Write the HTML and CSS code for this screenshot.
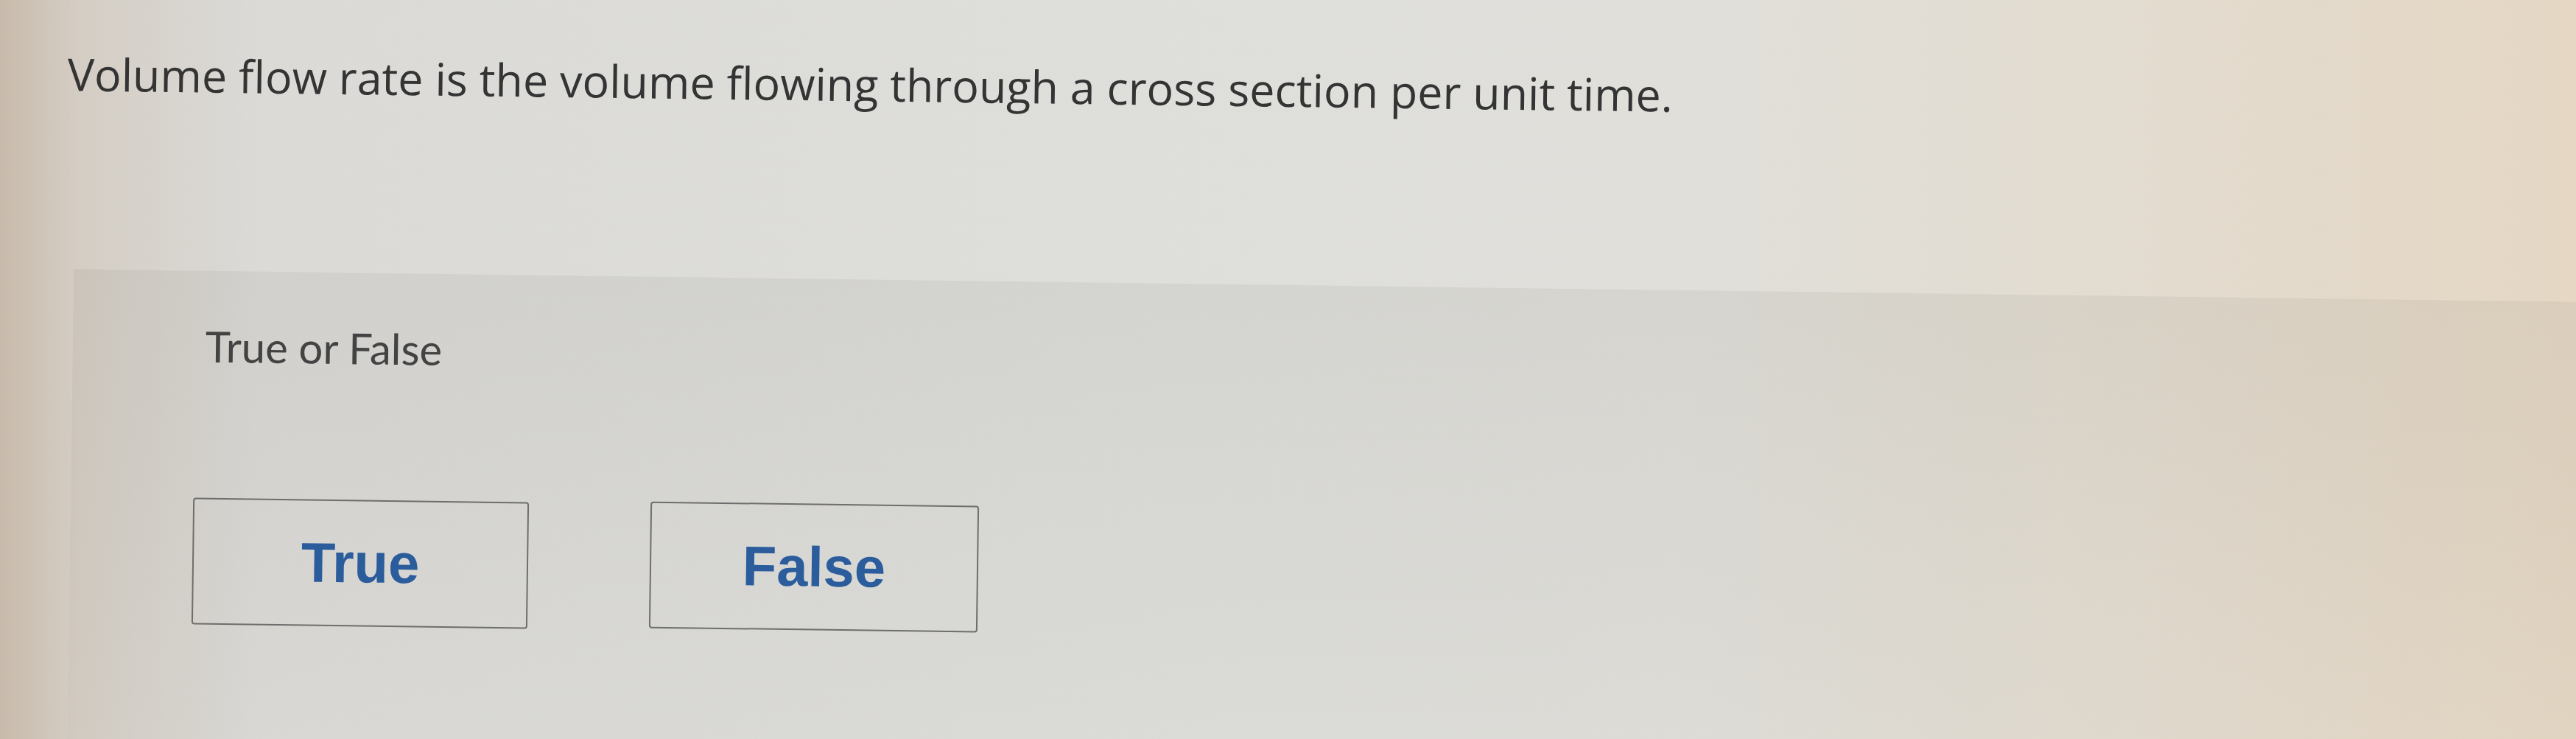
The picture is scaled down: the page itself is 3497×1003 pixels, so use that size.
FILE: index.html
```html
<!DOCTYPE html>
<html lang="en">
<head>
  <meta charset="UTF-8" />
  <meta name="viewport" content="width=device-width, initial-scale=1" />
  <title>True or False</title>
  <link rel="stylesheet" href="styles.css">
</head>
<body>
  <div class="screen">
    <p class="question">Volume flow rate is the volume flowing through a cross section per unit time.</p>

    <div class="answer-panel">
      <p class="prompt">True or False</p>
      <div class="choices">
        <button class="choice choice-true" type="button">True</button>
        <button class="choice choice-false" type="button">False</button>
      </div>
    </div>
  </div>
</body>
</html>
```

FILE: styles.css
```css
html, body {
  height: 100%;
}
body {
  margin: 0;
  overflow: hidden;
  background: linear-gradient(90deg, #c9baab 0%, #d4cdc4 3%, #dbdad7 10%, #dededb 45%, #e0dfda 65%, #e3dbce 85%, #e5d7c4 100%);
}
/* slight tilt of the whole screen */
.screen {
  height: 100%;
  display: flex;
  flex-direction: column;
  transform: rotate(0.75deg);
  transform-origin: 0 0;
}
.question {
  margin: 0;
  padding: 57px 0 0 93px;
  font-family: "Open Sans", sans-serif;
  font-size: 61px;
  line-height: 1.362;
  color: #343434;
}
.answer-panel {
  flex: 1;
  margin: 224px -60px 0 105px;
  padding: 67px 0 0 180px;
  background: linear-gradient(180deg, rgba(70, 70, 60, 0.065) 0%, rgba(70, 70, 60, 0.05) 35%, rgba(70, 70, 60, 0.02) 100%);
}
.prompt {
  margin: 0;
  font-family: Lato, sans-serif;
  font-size: 58px;
  line-height: 1.2;
  color: #434343;
}
.choices {
  display: flex;
  align-items: flex-start;
  gap: 165px;
  margin: 171px 0 0 -14px;
}
.choice {
  height: 172px;
  display: flex;
  align-items: center;
  justify-content: center;
  padding: 0;
  border: 2px solid #6e6e6e;
  border-radius: 4px;
  background: transparent;
  font-family: "Liberation Sans", Arial, sans-serif;
  font-weight: bold;
  font-size: 76px;
  color: #2b5c9c;
}
.choice-true {
  width: 456px;
}
.choice-false {
  width: 446px;
  margin-top: -3px;
}
```
